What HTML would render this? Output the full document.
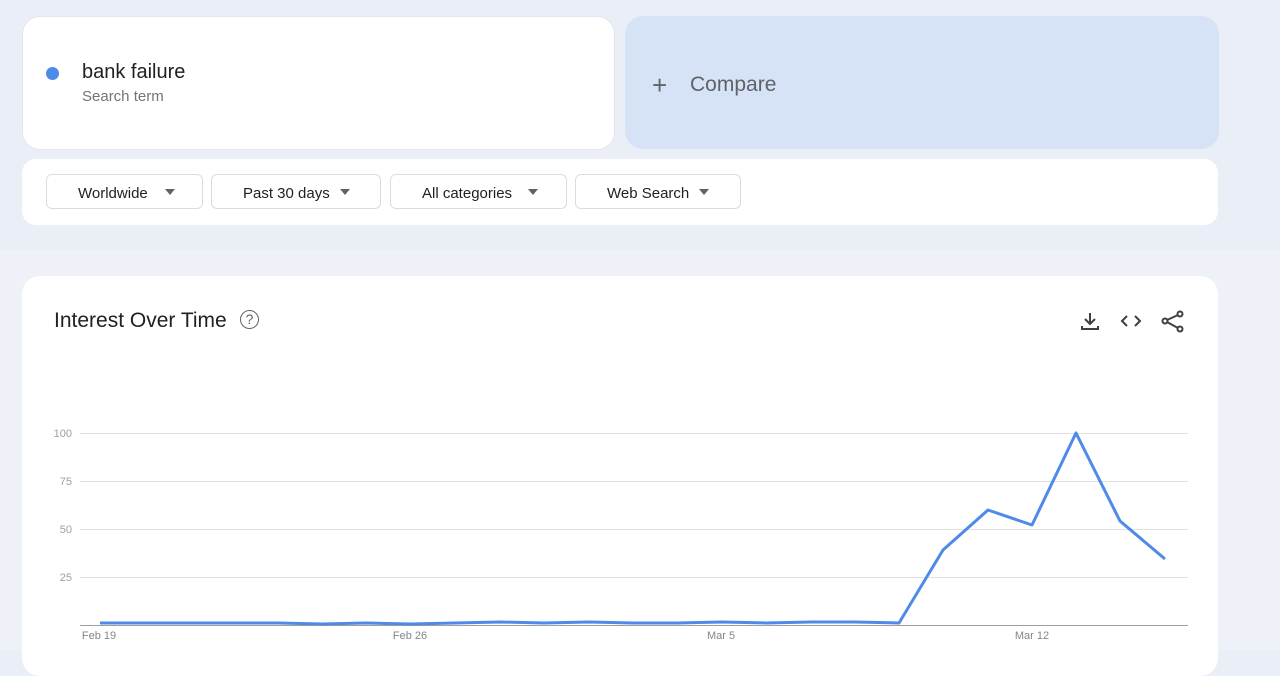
<!DOCTYPE html>
<html><head><style>
body{margin:0;width:1280px;height:650px;background:#eaeef7;font-family:"Liberation Sans",Arial,sans-serif;position:relative;overflow:hidden;color:#202124}
.card{position:absolute;background:#fff;border-radius:18px}
.dd{position:absolute;top:174px;height:35px;border:1px solid #dadce0;border-radius:6px;background:#fff;font-size:15px;line-height:35px;box-sizing:border-box;color:#202124}
.dd span{position:absolute;top:1px}
.tri{position:absolute;top:14px;width:0;height:0;border-left:5px solid transparent;border-right:5px solid transparent;border-top:6px solid #5f6368}
</style></head><body>
<div style="position:absolute;left:0;top:250px;width:1280px;height:400px;background:#eef1f8"></div>
<div class="card" style="left:22px;top:16px;width:593px;height:134px;border:1px solid #e3e6ee;box-sizing:border-box"></div>
<div style="position:absolute;left:46px;top:67px;width:13px;height:13px;border-radius:50%;background:#4e8ae8"></div>
<div style="position:absolute;left:82px;top:61px;font-size:20px">bank failure</div>
<div style="position:absolute;left:82px;top:88px;font-size:15px;color:#70757a">Search term</div>
<div class="card" style="left:625px;top:16px;width:594px;height:133px;background:#d6e2f6"></div>
<div style="position:absolute;left:652px;top:70px;font-size:26px;color:#5f6368;font-weight:300">+</div>
<div style="position:absolute;left:690px;top:73px;font-size:21px;color:#5f6368">Compare</div>
<div class="card" style="left:22px;top:159px;width:1196px;height:66px;border-radius:14px"></div>
<div class="dd" style="left:46px;width:157px"><span style="left:31px">Worldwide</span><div class="tri" style="left:118px"></div></div>
<div class="dd" style="left:211px;width:170px"><span style="left:31px">Past 30 days</span><div class="tri" style="left:128px"></div></div>
<div class="dd" style="left:390px;width:177px"><span style="left:31px">All categories</span><div class="tri" style="left:137px"></div></div>
<div class="dd" style="left:575px;width:166px"><span style="left:31px">Web Search</span><div class="tri" style="left:123px"></div></div>
<div class="card" style="left:22px;top:276px;width:1196px;height:400px"></div>
<div style="position:absolute;left:54px;top:309px;font-size:21px">Interest Over Time</div>
<div style="position:absolute;left:240px;top:310px;width:17px;height:17px;border:1.5px solid #5f6368;border-radius:50%;font-size:14px;line-height:17px;text-align:center;color:#5f6368">?</div>
<svg style="position:absolute;left:1075px;top:308px" width="110" height="28" fill="none" stroke="#3c4043" stroke-width="2">
<path d="M15 5v11M10 11l5 5 5-5M7 18v3h16v-3"/>
<path d="M52 8l-5 5 5 5M60 8l5 5-5 5"/>
<circle cx="105" cy="6" r="2.5"/><circle cx="90" cy="13" r="2.5"/><circle cx="105" cy="21" r="2.5"/><path d="M92 12l11-5M92 14l11 6"/>
</svg>
<svg style="position:absolute;left:0;top:0" width="1280" height="650">
<g stroke="#e0e0e0" stroke-width="1"><line x1="80" y1="433.5" x2="1188" y2="433.5"/><line x1="80" y1="481.5" x2="1188" y2="481.5"/><line x1="80" y1="529.5" x2="1188" y2="529.5"/><line x1="80" y1="577.5" x2="1188" y2="577.5"/></g>
<line x1="80" y1="625.5" x2="1188" y2="625.5" stroke="#9e9e9e"/>
<g font-size="11" fill="#9aa0a6" text-anchor="end"><text x="72" y="437">100</text><text x="72" y="485">75</text><text x="72" y="533">50</text><text x="72" y="581">25</text></g>
<g font-size="11" fill="#80868b" text-anchor="middle"><text x="99" y="639">Feb 19</text><text x="410" y="639">Feb 26</text><text x="721" y="639">Mar 5</text><text x="1032" y="639">Mar 12</text></g>
<polyline fill="none" stroke="#4e8ae8" stroke-width="3" stroke-linejoin="round" points="100,623 144,623 189,623 233,623 278,623 322,624 366,623 411,624 455,623 500,622 544,623 589,622 633,623 677,623 722,622 766,623 811,622 855,622 899,623 943,550 988,510 1032,525 1076,433 1120,521 1165,559"/>
</svg>
</body></html>
